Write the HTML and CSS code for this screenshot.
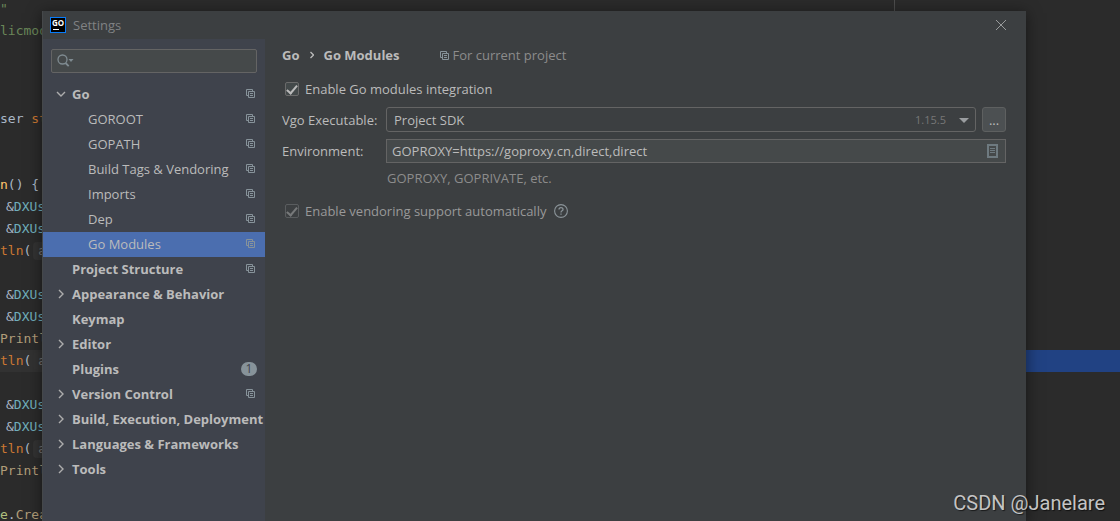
FILE: index.html
```html
<!DOCTYPE html>
<html lang="en">
<head>
    <meta charset="UTF-8">
    <meta name="viewport" content="width=device-width, initial-scale=1.0">
    <title>Settings</title>
    <link rel="stylesheet" href="styles.css">
</head>
<body>

    <svg class="symbols" aria-hidden="true">
        <symbol id="copy" viewBox="0 0 9 9">
            <path d="M2 6.5H.5V.5h6V2M2.5 2.5h6v6h-6zM4 4.5h3M4 6.5h3" fill="none" stroke="currentColor"/>
        </symbol>
        <symbol id="right" viewBox="0 0 6 10">
            <path d="M1 1l4 4-4 4" fill="none" stroke="currentColor" stroke-width="1.4"/>
        </symbol>
        <symbol id="down" viewBox="0 0 10 6">
            <path d="M1 1l4 4 4-4" fill="none" stroke="currentColor" stroke-width="1.4"/>
        </symbol>
    </svg>

    <div class="editor">
        <div class="line string">"</div>
        <div class="line string">licmodel</div>
        <div class="line"></div>
        <div class="line"></div>
        <div class="line"></div>
        <div class="line">ser <span class="keyword">string</span></div>
        <div class="line"></div>
        <div class="line"></div>
        <div class="line"><span class="func">n</span>() {</div>
        <div class="line indent">&amp;<span class="type">DXUser</span></div>
        <div class="line indent">&amp;<span class="type">DXUser</span></div>
        <div class="line"><span class="keyword">tln</span>(<span class="hint">a</span></div>
        <div class="line"></div>
        <div class="line indent">&amp;<span class="type">DXUser</span></div>
        <div class="line indent">&amp;<span class="type">DXUser</span></div>
        <div class="line"><span class="call">Println</span></div>
        <div class="line current"><span class="keyword">tln</span>(<span class="hint">a</span><span class="selection"></span></div>
        <div class="line"></div>
        <div class="line indent">&amp;<span class="type">DXUser</span></div>
        <div class="line indent">&amp;<span class="type">DXUser</span></div>
        <div class="line"><span class="keyword">tln</span>(<span class="hint">a</span></div>
        <div class="line"><span class="call">Println</span></div>
        <div class="line"></div>
        <div class="line"><span class="field">e</span>.<span class="call">Create</span></div>
    </div>
    <div class="margin-guide"></div>

    <div class="dialog" role="dialog" aria-label="Settings">
        <div class="title-bar">
            <span class="logo">GO</span>
            <span class="title">Settings</span>
            <button class="close" aria-label="Close">
                <svg width="10" height="10" viewBox="0 0 10 10"><path d="M0 0l10 10M10 0L0 10" stroke="currentColor" fill="none"/></svg>
            </button>
        </div>

        <div class="content">
            <div class="sidebar">
                <div class="search">
                    <svg width="17" height="14" viewBox="0 0 17 14" aria-hidden="true">
                        <circle cx="5.5" cy="5.5" r="4.5" fill="none" stroke="currentColor" stroke-width="1.3"/>
                        <path d="M8.5 9l3.2 3.2" stroke="currentColor" stroke-width="1.8"/>
                        <path d="M11.5 5h5L14 8z" fill="currentColor"/>
                    </svg>
                    <input type="text" aria-label="Search settings">
                </div>
                <ul class="tree">
                    <li><a href="#"><svg class="arrow-down"><use href="#down"/></svg><b>Go</b><svg class="copy"><use href="#copy"/></svg></a></li>
                    <li class="child"><a href="#">GOROOT<svg class="copy"><use href="#copy"/></svg></a></li>
                    <li class="child"><a href="#">GOPATH<svg class="copy"><use href="#copy"/></svg></a></li>
                    <li class="child"><a href="#">Build Tags &amp; Vendoring<svg class="copy"><use href="#copy"/></svg></a></li>
                    <li class="child"><a href="#">Imports<svg class="copy"><use href="#copy"/></svg></a></li>
                    <li class="child"><a href="#">Dep<svg class="copy"><use href="#copy"/></svg></a></li>
                    <li class="child selected"><a href="#">Go Modules<svg class="copy"><use href="#copy"/></svg></a></li>
                    <li class="leaf"><a href="#"><b>Project Structure</b><svg class="copy"><use href="#copy"/></svg></a></li>
                    <li><a href="#"><svg class="arrow"><use href="#right"/></svg><b>Appearance &amp; Behavior</b></a></li>
                    <li class="leaf"><a href="#"><b>Keymap</b></a></li>
                    <li><a href="#"><svg class="arrow"><use href="#right"/></svg><b>Editor</b></a></li>
                    <li class="leaf"><a href="#"><b>Plugins</b><span class="badge">1</span></a></li>
                    <li><a href="#"><svg class="arrow"><use href="#right"/></svg><b>Version Control</b><svg class="copy"><use href="#copy"/></svg></a></li>
                    <li><a href="#"><svg class="arrow"><use href="#right"/></svg><b>Build, Execution, Deployment</b></a></li>
                    <li><a href="#"><svg class="arrow"><use href="#right"/></svg><b>Languages &amp; Frameworks</b></a></li>
                    <li><a href="#"><svg class="arrow"><use href="#right"/></svg><b>Tools</b></a></li>
                </ul>
            </div>

            <div class="panel">
                <div class="breadcrumb">
                    <b>Go</b>
                    <svg class="crumb-arrow" viewBox="0 0 4 8"><path d="M.5 1l3 3-3 3" fill="none" stroke="currentColor" stroke-width="1.3"/></svg>
                    <b>Go Modules</b>
                    <span class="scope"><svg class="copy"><use href="#copy"/></svg>For current project</span>
                </div>

                <div class="check-row">
                    <input type="checkbox" id="enable" checked>
                    <label for="enable">Enable Go modules integration</label>
                </div>

                <div class="form-row">
                    <label for="sdk">Vgo Executable:</label>
                    <div class="select-wrap">
                        <select id="sdk"><option>Project SDK</option></select>
                        <span class="version">1.15.5</span>
                    </div>
                    <button class="browse">...</button>
                </div>
                <div class="form-row">
                    <label for="env">Environment:</label>
                    <div class="env-field">
                        <input type="text" id="env" value="GOPROXY=https://goproxy.cn,direct,direct">
                        <svg width="11" height="14" viewBox="0 0 11 14" aria-hidden="true">
                            <path d="M1 1h9v12H1z" fill="none" stroke="currentColor" stroke-width="2"/>
                            <path d="M3 4.5h5M3 6.5h5M3 8.5h5" stroke="currentColor"/>
                        </svg>
                    </div>
                </div>
                <p class="help-text">GOPROXY, GOPRIVATE, etc.</p>

                <div class="check-row">
                    <input type="checkbox" id="vendor" checked disabled>
                    <label for="vendor">Enable vendoring support automatically</label>
                    <svg class="question" width="14" height="14" viewBox="0 0 14 14" aria-hidden="true">
                        <circle cx="7" cy="7" r="6.4" fill="none" stroke="currentColor" stroke-width="1.1"/>
                        <path d="M5 5.6C5 3 9 3 9 5.4 9 6.8 7 6.8 7 8.4M7 9.4v1.4" fill="none" stroke="currentColor" stroke-width="1.3"/>
                    </svg>
                </div>
            </div>
        </div>
    </div>

    <div class="watermark">CSDN @Janelare</div>

</body>
</html>
```
FILE: styles.css
```css
* {
    box-sizing: border-box;
    margin: 0;
    padding: 0;
}

body {
    position: relative;
    height: 100vh;
    overflow: hidden;
    background-color: #2b2b2b;
    color: #bbbbbb;
    font-family: "Open Sans", "Noto Sans", sans-serif;
    font-size: 13px;
}

input, select, button {
    font: inherit;
    color: inherit;
}

.symbols {
    position: absolute;
    width: 0;
    height: 0;
}

/* code editor behind the dialog */
.editor {
    margin-top: -2px;
    font-family: "DejaVu Sans Mono", monospace;
    color: #a9b7c6;
}

.line {
    display: flex;
    height: 22px;
    line-height: 22px;
    white-space: pre;
}

.indent {
    padding-left: 6px;
}

.string {
    color: #6a8759;
}

.keyword {
    color: #cc7832;
}

.func {
    color: #ffc66d;
}

.type {
    color: #6fafbd;
}

.call {
    color: #b09d79;
}

.field {
    color: #afbf7e;
}

.hint {
    margin: 2px 0 2px 2px;
    padding: 0 5px;
    border-radius: 4px;
    background-color: #333333;
    color: #787878;
    font-size: 12px;
    line-height: 18px;
}

.current {
    background-color: #323232;
}

.selection {
    flex: 1;
    margin-left: 100px;
    background-color: #214283;
}

.margin-guide {
    position: absolute;
    top: 0;
    bottom: 0;
    right: 225px;
    width: 1px;
    background-color: #4d4d4d;
}

/* dialog */
.dialog {
    position: absolute;
    top: 11px;
    bottom: 0;
    left: 42px;
    right: 94px;
    display: flex;
    flex-direction: column;
    border-left: 1px solid #45484a;
    background-color: #3c3f41;
    box-shadow: 0 2px 14px rgba(0, 0, 0, 0.5);
}

.title-bar {
    display: flex;
    align-items: center;
    height: 28px;
    padding: 0 20px 0 7px;
}

.logo {
    width: 16px;
    height: 16px;
    border: 1px solid #087cfa;
    background: linear-gradient(#fff, #fff) 2px 11px / 6px 1px no-repeat #000;
    color: #fff;
    font-size: 8px;
    font-weight: bold;
    line-height: 10px;
    text-align: center;
}

.title {
    margin-left: 7px;
    color: #808284;
}

.close {
    display: flex;
    margin-left: auto;
    border: 0;
    background: none;
    color: #999b9c;
}

.content {
    display: flex;
    flex: 1;
    min-height: 0;
}

.sidebar {
    flex: none;
    width: 222px;
    padding-top: 10px;
    background-color: #3f434c;
}

.search {
    display: flex;
    align-items: center;
    height: 24px;
    margin: 0 8px;
    padding: 0 5px;
    border: 1px solid #646464;
    border-radius: 2px;
    background-color: #45494a;
    color: #7f8b91;
}

.search input {
    flex: 1;
    min-width: 0;
    border: 0;
    outline: none;
    background: none;
}

.tree {
    margin-top: 9px;
    list-style: none;
}

.tree a {
    display: flex;
    align-items: center;
    height: 25px;
    padding: 0 10px 2px 13px;
    color: inherit;
    text-decoration: none;
    white-space: nowrap;
}

.tree .leaf a {
    padding-left: 29px;
}

.tree .child a {
    padding-left: 45px;
}

.tree .selected a {
    background-color: #4b6eaf;
}

.arrow {
    flex: none;
    width: 6px;
    height: 10px;
    margin: 0 8px 0 2px;
    color: #adadad;
}

.arrow-down {
    flex: none;
    width: 10px;
    height: 6px;
    margin-right: 6px;
    color: #adadad;
}

.copy {
    flex: none;
    width: 9px;
    height: 9px;
    color: #87939a;
}

.tree .copy {
    margin-left: auto;
}

.badge {
    width: 16px;
    height: 14px;
    margin-left: auto;
    margin-right: -2px;
    border-radius: 7px;
    background-color: #87939a;
    color: #3f434c;
    font-size: 12px;
    line-height: 14px;
    text-align: center;
}

/* settings page */
.panel {
    flex: 1;
    padding: 5px 20px 0 17px;
}

.breadcrumb {
    display: flex;
    align-items: center;
    height: 22px;
}

.crumb-arrow {
    width: 4px;
    height: 8px;
    margin: 0 9px 0 11px;
}

.scope {
    display: flex;
    align-items: center;
    gap: 4px;
    margin-left: 40px;
    color: #8c8c8c;
}

.check-row {
    display: flex;
    align-items: center;
    height: 24px;
    margin-top: 11px;
    padding-left: 3px;
}

.check-row input {
    appearance: none;
    display: grid;
    place-items: center;
    width: 14px;
    height: 14px;
    margin-right: 6px;
    border: 1px solid #6b6b6b;
    border-radius: 2px;
    background-color: #43494a;
}

.check-row input:checked::before {
    content: "";
    width: 4px;
    height: 9px;
    margin-top: -2px;
    border: solid #bbbbbb;
    border-width: 0 2px 2px 0;
    transform: rotate(40deg);
}

.check-row input:disabled {
    border-color: #5a5d5f;
    background: none;
}

.check-row input:disabled::before {
    border-color: #77797a;
}

.check-row input:disabled + label {
    color: #999999;
}

.question {
    margin-left: 8px;
    color: #8b9499;
}

.form-row {
    display: flex;
    align-items: center;
    height: 25px;
    margin-top: 6px;
}

.form-row > label {
    flex: none;
    width: 104px;
}

.select-wrap {
    position: relative;
    flex: 1;
}

.select-wrap select {
    appearance: none;
    display: block;
    width: 100%;
    height: 25px;
    padding: 0 7px;
    border: 1px solid #646464;
    border-radius: 3px;
    background-color: #3c3f41;
}

.select-wrap::after {
    content: "";
    position: absolute;
    top: 11px;
    right: 7px;
    border: solid transparent;
    border-width: 5px 5px 0;
    border-top-color: #9a9da0;
}

.version {
    position: absolute;
    top: 0;
    right: 30px;
    color: #777777;
    font-size: 11px;
    line-height: 25px;
}

.browse {
    width: 24px;
    height: 25px;
    margin-left: 6px;
    border: 1px solid #5e6060;
    border-radius: 3px;
    background-color: #4c5052;
}

.env-field {
    display: flex;
    flex: 1;
    align-items: center;
    height: 24px;
    padding: 0 7px 0 5px;
    border: 1px solid #646464;
    background-color: #45494a;
    color: #6e7a80;
}

.env-field input {
    flex: 1;
    min-width: 0;
    border: 0;
    outline: none;
    background: none;
    color: #bbbbbb;
}

.help-text {
    margin: 5px 0 0 105px;
    color: #8c8c8c;
    line-height: 20px;
}

.watermark {
    position: absolute;
    right: 15px;
    bottom: 6px;
    color: #c4c4c4;
    font-family: Roboto, "Liberation Sans", sans-serif;
    font-size: 20px;
    line-height: 24px;
    text-shadow: 1px 1px 1px rgba(0, 0, 0, 0.6);
}
```
